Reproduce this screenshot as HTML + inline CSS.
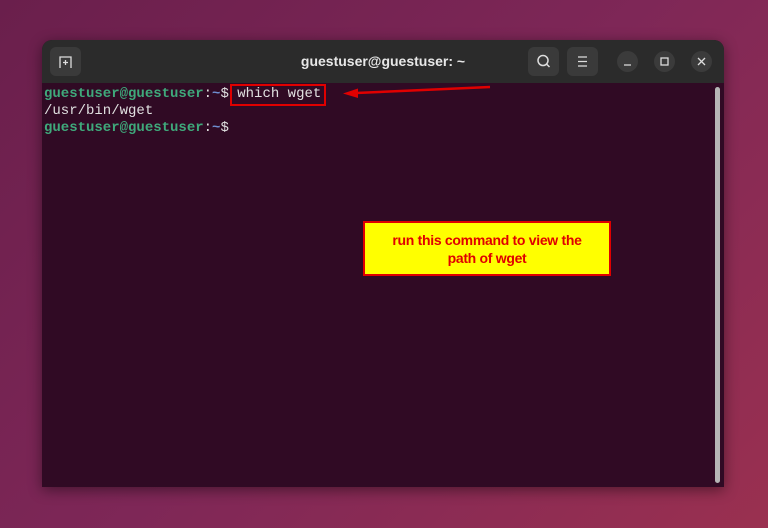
<!DOCTYPE html>
<html><head><style>
body{margin:0;width:768px;height:528px;overflow:hidden;background:linear-gradient(135deg,#6a1f4c 0%,#7e2757 50%,#9a3050 100%);position:relative;font-family:"Liberation Sans",sans-serif}
.win{position:absolute;left:42px;top:40px;width:682px;height:447px;background:#300a24;border-radius:10px 10px 0 0;overflow:hidden;box-shadow:0 3px 14px rgba(0,0,0,.45)}
.tb{position:absolute;left:0;top:0;width:682px;height:43px;background:#2b2b2b}
.title{position:absolute;left:0;right:0;top:13px;text-align:center;color:#e8e8e8;font-weight:bold;font-size:14px}
.btn{position:absolute;top:7px;width:31px;height:29px;background:#3a3a3a;border-radius:6px}
.cb{position:absolute;top:11px;width:21px;height:21px;border-radius:50%;background:#3b3b3b}
.term{position:absolute;left:2px;top:46px;font-family:"Liberation Mono",monospace;font-size:14px;line-height:17px;color:#e0e0e0;white-space:pre}
.g{color:#3fa97b;font-weight:bold}.b{color:#6f8fd1;font-weight:bold}
.sb{position:absolute;left:673px;top:47px;width:5px;height:396px;background:#b5b5b5;border-radius:3px}
</style></head><body>
<div class="win">
<div class="tb">
<div class="btn" style="left:8px"><svg width="31" height="29"><path d="M10 21V10h11v11M15.5 13v5M13 15.5h5" stroke="#ddd" stroke-width="1.3" fill="none"/></svg></div>
<div class="title">guestuser@guestuser: ~</div>
<div class="btn" style="left:486px"><svg width="31" height="29"><circle cx="15" cy="13.5" r="5" stroke="#ddd" stroke-width="1.5" fill="none"/><path d="M18.5 17l3 3" stroke="#ddd" stroke-width="1.5"/></svg></div>
<div class="btn" style="left:525px"><svg width="31" height="29"><path d="M11 10h9M11 14.5h9M11 19h9" stroke="#ddd" stroke-width="1.3"/></svg></div>
<div class="cb" style="left:575px"><svg width="21" height="21"><path d="M7 14h7" stroke="#ddd" stroke-width="1.3"/></svg></div>
<div class="cb" style="left:612px"><svg width="21" height="21"><rect x="7" y="7" width="7" height="7" stroke="#ddd" stroke-width="1.3" fill="none"/></svg></div>
<div class="cb" style="left:649px"><svg width="21" height="21"><path d="M7 7l7 7M14 7l-7 7" stroke="#ddd" stroke-width="1.3"/></svg></div>
</div>
<div class="term"><span class="g">guestuser@guestuser</span>:<span class="b">~</span>$ which wget
/usr/bin/wget
<span class="g">guestuser@guestuser</span>:<span class="b">~</span>$</div>
<div class="sb"></div>
</div>
<div style="position:absolute;left:230px;top:84px;width:92px;height:18px;border:2px solid #e00000"></div>
<svg style="position:absolute;left:0;top:0" width="768" height="528"><path d="M490 87L356 93" stroke="#e00000" stroke-width="2.5"/><path d="M343 93.5L358 88.5L358 98z" fill="#e00000"/></svg>
<div style="position:absolute;left:363px;top:221px;background:#ffff00;border:2px solid #e00000;color:#e00000;font-weight:bold;font-size:14px;text-align:center;line-height:18px;padding-top:8px;box-sizing:border-box;width:248px;height:55px;letter-spacing:-0.3px">run this command to view the<br>path of wget</div>
</body></html>
